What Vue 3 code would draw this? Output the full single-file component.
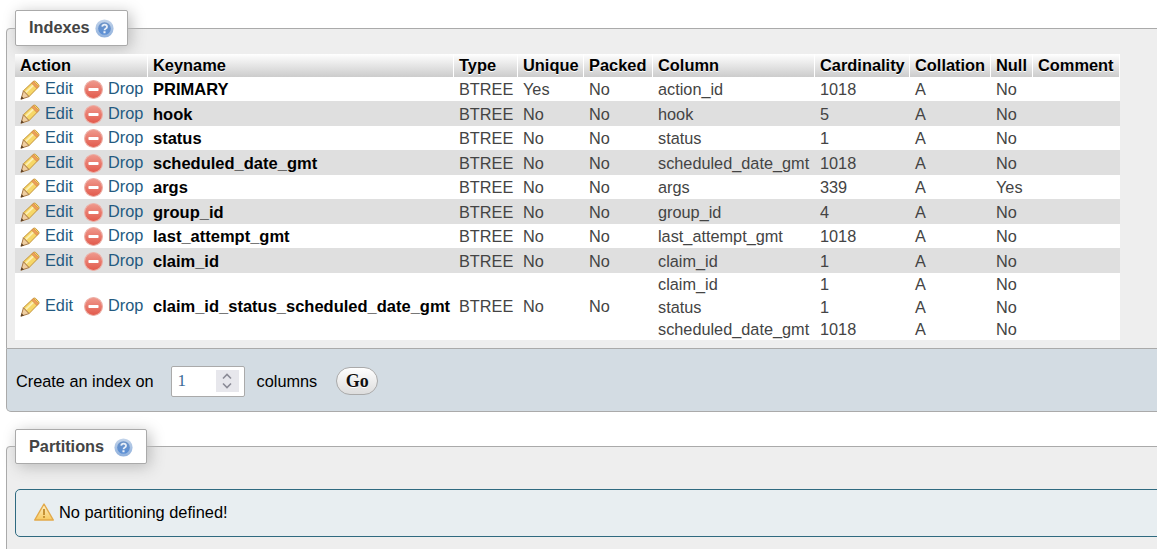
<script setup>
const rows = [
  { key: 'PRIMARY', unique: 'Yes', cols: [['action_id', '1018', 'No']] },
  { key: 'hook', unique: 'No', cols: [['hook', '5', 'No']] },
  { key: 'status', unique: 'No', cols: [['status', '1', 'No']] },
  { key: 'scheduled_date_gmt', unique: 'No', cols: [['scheduled_date_gmt', '1018', 'No']] },
  { key: 'args', unique: 'No', cols: [['args', '339', 'Yes']] },
  { key: 'group_id', unique: 'No', cols: [['group_id', '4', 'No']] },
  { key: 'last_attempt_gmt', unique: 'No', cols: [['last_attempt_gmt', '1018', 'No']] },
  { key: 'claim_id', unique: 'No', cols: [['claim_id', '1', 'No']] },
  {
    key: 'claim_id_status_scheduled_date_gmt',
    unique: 'No',
    cols: [
      ['claim_id', '1', 'No'],
      ['status', '1', 'No'],
      ['scheduled_date_gmt', '1018', 'No'],
    ],
  },
]
const heads = ['Type', 'Unique', 'Packed', 'Column', 'Cardinality', 'Collation', 'Null', 'Comment']
</script>

<template>
  <div class="page">
    <svg width="0" height="0" class="defs">
      <defs>
        <linearGradient id="helpg" x1="0" y1="0" x2="0" y2="1">
          <stop offset="0" stop-color="#c3d4ea" />
          <stop offset="1" stop-color="#8fb0dc" />
        </linearGradient>
        <linearGradient id="helpi" x1="0" y1="0" x2="0" y2="1">
          <stop offset="0" stop-color="#6d93c6" />
          <stop offset="1" stop-color="#5a8fd6" />
        </linearGradient>
        <linearGradient id="dropg" x1="0" y1="0" x2="0" y2="1">
          <stop offset="0" stop-color="#ef9a8e" />
          <stop offset="1" stop-color="#e2594b" />
        </linearGradient>
        <linearGradient id="warng" x1="0" y1="0" x2="0" y2="1">
          <stop offset="0" stop-color="#fdf3cf" />
          <stop offset="1" stop-color="#f7c95f" />
        </linearGradient>
        <symbol id="help" viewBox="0 0 18 18">
          <circle cx="9" cy="9" r="8.6" fill="url(#helpg)" />
          <circle cx="9" cy="9" r="6" fill="url(#helpi)" />
          <path d="M6.8 7.2a2.3 2 0 1 1 3.5 1.8c-.8.5-1.3.8-1.3 1.7" fill="none" stroke="#e9eff8" stroke-width="1.7" />
          <rect x="8" y="11.6" width="2" height="1.9" fill="#e9eff8" />
        </symbol>
        <symbol id="pencil" viewBox="0 0 20 20">
          <path d="M3.4 10.8 13.2 1.6c.7-.7 1.8-.7 2.5 0l2.8 2.8c.7.7.7 1.8 0 2.5L9 16.6z" fill="#f6d768" stroke="#c4933a" />
          <path d="M5.8 12.4 15 3.6" stroke="#fcf0b4" stroke-width="2" />
          <path d="M13.4 1.4l5.2 5.2-1.8 1.8-5.2-5.2z" fill="#ee9f5a" stroke="#c98443" stroke-width=".6" />
          <path d="M3.4 10.8 9 16.6 1.1 19.2z" fill="#f0cfa2" stroke="#a87a45" />
          <path d="M.6 19.6l1-3.4 2.4 2.2z" fill="#5d4126" />
        </symbol>
        <symbol id="drop" viewBox="0 0 18 18">
          <circle cx="9" cy="9" r="8.5" fill="url(#dropg)" stroke="#ecb0a7" />
          <rect x="4.2" y="7.5" width="9.6" height="3" rx=".7" fill="#fff" />
        </symbol>
        <symbol id="warn" viewBox="0 0 20 18">
          <path d="M10 1 19.3 17H.7z" fill="url(#warng)" stroke="#e2a94a" stroke-width="1.4" stroke-linejoin="round" />
          <rect x="9.1" y="6" width="1.8" height="6" fill="#c08a2c" />
          <rect x="9.1" y="13" width="1.8" height="1.9" fill="#c08a2c" />
        </symbol>
      </defs>
    </svg>

    <form class="indexes">
      <fieldset class="box main">
        <legend>
          Indexes
          <svg class="help" width="19" height="19"><use href="#help" /></svg>
        </legend>
        <table>
          <colgroup>
            <col style="width: 133px" />
            <col style="width: 306px" />
            <col style="width: 64px" />
            <col style="width: 66px" />
            <col style="width: 69px" />
            <col style="width: 162px" />
            <col style="width: 95px" />
            <col style="width: 81px" />
            <col style="width: 42px" />
            <col style="width: 87px" />
          </colgroup>
          <thead>
            <tr>
              <th>Action</th>
              <th>Keyname</th>
              <th v-for="h in heads" :key="h">{{ h }}</th>
            </tr>
          </thead>
          <tbody v-for="(r, i) in rows" :key="r.key" :class="[i % 2 ? 'even' : 'odd', r.cols.length > 1 ? 'multi' : '']">
            <tr v-for="(c, j) in r.cols" :key="j">
              <template v-if="j === 0">
                <td :rowspan="r.cols.length" class="act">
                  <span class="actions">
                    <a class="link">
                      <svg width="20" height="20"><use href="#pencil" /></svg>
                      Edit
                    </a>
                    <a class="link">
                      <svg width="19" height="19"><use href="#drop" /></svg>
                      Drop
                    </a>
                  </span>
                </td>
                <td :rowspan="r.cols.length" class="key">{{ r.key }}</td>
                <td :rowspan="r.cols.length">BTREE</td>
                <td :rowspan="r.cols.length">{{ r.unique }}</td>
                <td :rowspan="r.cols.length">No</td>
              </template>
              <td>{{ c[0] }}</td>
              <td>{{ c[1] }}</td>
              <td>A</td>
              <td>{{ c[2] }}</td>
              <td v-if="j === 0" :rowspan="r.cols.length"></td>
            </tr>
          </tbody>
        </table>
      </fieldset>

      <div class="footer">
        <span>Create an index on</span>
        <span class="number">
          <span class="value">1</span>
          <span class="spin">
            <svg width="12" height="18" viewBox="0 0 12 18">
              <path d="M2 6.5 6 2.5l4 4M2 11.5l4 4 4-4" fill="none" stroke="#8b8b96" stroke-width="1.6" />
            </svg>
          </span>
        </span>
        <span>columns</span>
        <button type="button" class="go">Go</button>
      </div>
    </form>

    <fieldset class="box parts">
      <legend>
        Partitions
        <svg class="help wide" width="19" height="19"><use href="#help" /></svg>
      </legend>
      <div class="notice">
        <svg width="20" height="18"><use href="#warn" /></svg>
        <span>No partitioning defined!</span>
      </div>
    </fieldset>
  </div>
</template>

<style scoped>
.page {
  width: 1300px;
  padding: 0 0 0 6px;
  box-sizing: border-box;
  font-family: "Liberation Sans", Arial, sans-serif;
  font-size: 16.3px;
  color: #444;
}
.defs {
  position: absolute;
}
.box {
  margin: 0;
  min-width: 0;
  border: 1px solid #aaa;
  background: #eee;
  box-sizing: border-box;
}
.main {
  margin-top: 10px;
  padding: 8px 8px 8px;
  border-radius: 4px 0 0 0;
  height: 339px;
}
.box legend {
  margin-left: 0;
  padding: 0 13px;
  height: 35px;
  line-height: 33px;
  box-sizing: border-box;
  background: #fff;
  border: 1px solid #aaa;
  border-radius: 2px;
  font-weight: bold;
  color: #444;
  box-shadow: 3px 3px 15px #bbb;
  white-space: nowrap;
}
.main legend {
  height: 36px;
}
.help {
  vertical-align: -5px;
  margin-left: 1px;
}
.help.wide {
  margin-left: 5px;
}
table {
  width: 1105px;
  table-layout: fixed;
  border-collapse: separate;
  border-spacing: 0;
  background: #fff;
}
th {
  height: 23px;
  padding: 0 0 0 5px;
  text-align: left;
  color: #000;
  font-size: 16.4px;
  font-weight: bold;
  white-space: nowrap;
  text-shadow: 0 1px 0 #fff;
  border-right: 1px solid #fff;
  background: linear-gradient(#fff, #ccc);
  box-sizing: border-box;
}
td {
  padding: 1px 0 0 5px;
  white-space: nowrap;
  vertical-align: middle;
  box-sizing: border-box;
}
.odd td {
  height: 24px;
}
.even td {
  height: 25px;
  background: #dfdfdf;
}
.multi td {
  height: 22.4px;
}
.multi td[rowspan] {
  padding-top: 0;
}
td.key {
  font-size: 16.5px;
  font-weight: bold;
  color: #000;
}
.actions {
  display: flex;
  gap: 11px;
  position: relative;
  top: -1px;
}
.link {
  display: inline-flex;
  align-items: center;
  gap: 5px;
  color: #235a81;
}
.link svg {
  position: relative;
  top: 1px;
}
.footer {
  display: flex;
  align-items: center;
  height: 63px;
  padding: 2px 0 0 9px;
  background: #d3dce3;
  border: 1px solid #aaa;
  border-top-width: 0;
  border-radius: 0 0 0 5px;
  box-sizing: border-box;
  color: #000;
}
.number {
  display: flex;
  align-items: center;
  justify-content: space-between;
  width: 74px;
  height: 31px;
  margin: 0 12px 0 17px;
  padding: 0 8px 0 6px;
  background: #fff;
  border: 1px solid #aaa;
  border-radius: 2px;
  box-sizing: border-box;
  font-family: "Liberation Serif", serif;
  font-size: 17px;
}
.value {
  color: #3a6c96;
}
.spin {
  display: flex;
  align-items: center;
  justify-content: center;
  width: 23px;
  height: 22px;
  margin-right: -3px;
  background: #e7e7ec;
}
.go {
  margin-left: 19px;
  width: 42px;
  height: 28px;
  padding: 0;
  border: 1px solid #aaa;
  border-radius: 14px;
  background: linear-gradient(#fff, #ddd);
  font-family: "Liberation Serif", serif;
  font-weight: bold;
  font-size: 18px;
  color: #111;
  text-shadow: 0 1px 0 #fff;
}
.parts {
  margin-top: 17px;
  padding: 25px 8px 30px;
  border-radius: 4px 0 0 0;
}
.notice {
  display: flex;
  align-items: center;
  gap: 5px;
  height: 48px;
  padding: 0 0 2px 18px;
  background: #e8eef1;
  border: 1px solid #2f6a80;
  border-radius: 5px;
  box-sizing: border-box;
  color: #000;
  font-size: 16.4px;
}
</style>

<style>
html, body {
  overflow: hidden;
  height: 549px;
  background: #fff;
}
</style>
